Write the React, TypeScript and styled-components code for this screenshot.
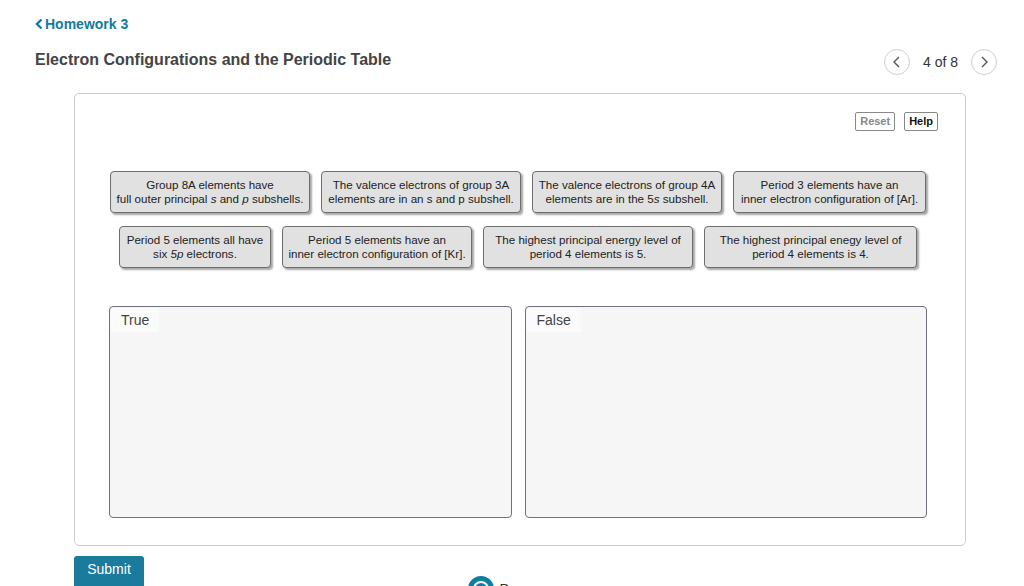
import React from "react";
import styled, { createGlobalStyle } from "styled-components";

const GlobalStyle = createGlobalStyle`
  html, body {
    margin: 0;
    padding: 0;
    background: #ffffff;
    font-family: "Liberation Sans", Arial, Helvetica, sans-serif;
    overflow: hidden;
  }
`;

const rowOne = [
  { id: 1, w: 200, lines: [<>Group 8A elements have</>, <>full outer principal <i>s</i> and <i>p</i> subshells.</>] },
  { id: 2, w: 200, lines: [<>The valence electrons of group 3A</>, <>elements are in an s and p subshell.</>] },
  { id: 3, w: 190, lines: [<>The valence electrons of group 4A</>, <>elements are in the 5<i>s</i> subshell.</>] },
  { id: 4, w: 193, lines: [<>Period 3 elements have an</>, <>inner electron configuration of [Ar].</>] },
];

const rowTwo = [
  { id: 5, w: 152, lines: [<>Period 5 elements all have</>, <>six <i>5p</i> electrons.</>] },
  { id: 6, w: 190, lines: [<>Period 5 elements have an</>, <>inner electron configuration of [Kr].</>] },
  { id: 7, w: 210, lines: [<>The highest principal energy level of</>, <>period 4 elements is 5.</>] },
  { id: 8, w: 213, lines: [<>The highest principal enegy level of</>, <>period 4 elements is 4.</>] },
];

const Page = styled.div`
  width: 1024px;
  height: 586px;
  overflow: hidden;
  box-sizing: border-box;
  padding: 15px 0 0 0;
`;

const Header = styled.div`
  padding: 0 27px 0 35px;
`;

const BackLink = styled.a`
  display: flex;
  align-items: center;
  gap: 2px;
  color: #137b9e;
  font-size: 14px;
  font-weight: bold;
  text-decoration: none;
  height: 18px;
`;

const TitleRow = styled.div`
  display: flex;
  align-items: center;
  justify-content: space-between;
  margin-top: 12px;
  height: 30px;
`;

const Title = styled.h1`
  margin: 0;
  font-size: 16px;
  font-weight: bold;
  color: #444444;
`;

const Pager = styled.div`
  display: flex;
  align-items: center;
  gap: 13px;
  margin-top: 4px;
`;

const RoundButton = styled.div`
  width: 26px;
  height: 26px;
  box-sizing: border-box;
  border: 1px solid #cfcfcf;
  border-radius: 50%;
  display: flex;
  align-items: center;
  justify-content: center;
`;

const PageCount = styled.span`
  font-size: 14px;
  color: #333333;
`;

const Panel = styled.div`
  margin: 18px 58px 0 74px;
  width: 892px;
  box-sizing: border-box;
  border: 1px solid #cbcbcb;
  border-radius: 5px;
  padding: 18px 27px 27px 34px;
`;

const Toolbar = styled.div`
  display: flex;
  justify-content: flex-end;
  gap: 9px;
`;

const ToolButton = styled.button<{ $dim?: boolean }>`
  font-family: "Liberation Sans", Arial, sans-serif;
  font-size: 11px;
  font-weight: bold;
  color: ${(p) => (p.$dim ? "#888888" : "#111111")};
  background: #ffffff;
  border: 1px solid #888888;
  border-radius: 2px;
  height: 19px;
  padding: 0 4px;
  line-height: 17px;
`;

const Body = styled.div`
  padding-right: 11px;
`;

const CardArea = styled.div`
  margin-top: 40px;
  display: flex;
  flex-direction: column;
  gap: 13px;
`;

const CardRow = styled.div`
  display: flex;
  justify-content: center;
  gap: 11px;
`;

const Card = styled.div<{ $w: number }>`
  width: ${(p) => p.$w}px;
  box-sizing: border-box;
  background: #e1e1e1;
  border: 1.5px solid #6d6d6d;
  border-radius: 4px;
  box-shadow: 2px 2px 2px rgba(0, 0, 0, 0.35);
  padding: 6px 3px;
  text-align: center;
  font-size: 11.6px;
  line-height: 14px;
  color: #222222;
  white-space: nowrap;
`;

const Zones = styled.div`
  margin-top: 38px;
  display: flex;
  justify-content: center;
  gap: 13px;
`;

const Zone = styled.div`
  width: 403px;
  height: 212px;
  box-sizing: border-box;
  background: #f6f6f6;
  border: 1.5px solid #707080;
  border-radius: 4px;
  padding: 1px;
`;

const ZoneLabel = styled.div`
  display: inline-block;
  background: #fbfbfb;
  font-size: 14px;
  color: #444444;
  padding: 4px 10px 4px 10px;
  min-width: 27px;
`;

const SubmitButton = styled.button`
  margin: 10px 0 0 74px;
  width: 70px;
  height: 34px;
  border: none;
  border-radius: 3px 3px 0 0;
  background: #1a7b9d;
  color: #ffffff;
  font-family: "Liberation Sans", Arial, sans-serif;
  font-size: 14px;
  padding: 0 0 8px 0;
  display: block;
`;

const Footer = styled.div`
  margin-top: -14px;
  display: flex;
  justify-content: center;
  align-items: flex-start;
  gap: 5px;
  padding-right: 4px;
`;

const Logo = styled.div`
  width: 26px;
  height: 26px;
  border-radius: 50%;
  background: #0d7ea1;
  display: flex;
  align-items: center;
  justify-content: center;
`;

const LogoText = styled.span`
  margin-top: 5px;
  font-size: 14px;
  color: #333333;
`;

const Chevron = ({ dir }: { dir: "left" | "right" }) => (
  <svg width="10" height="12" viewBox="0 0 10 12">
    <path
      d={dir === "left" ? "M7 1 L2 6 L7 11" : "M3 1 L8 6 L3 11"}
      fill="none"
      stroke="#555"
      strokeWidth="1.4"
    />
  </svg>
);

const App = () => {
  return (
    <Page>
      <GlobalStyle />
      <Header>
        <BackLink href="#">
          <svg width="8" height="12" viewBox="0 0 8 12">
            <path d="M6.5 1.5 L2 6 L6.5 10.5" fill="none" stroke="#137b9e" strokeWidth="2.4" />
          </svg>
          Homework 3
        </BackLink>
        <TitleRow>
          <Title>Electron Configurations and the Periodic Table</Title>
          <Pager>
            <RoundButton>
              <Chevron dir="left" />
            </RoundButton>
            <PageCount>4 of 8</PageCount>
            <RoundButton>
              <Chevron dir="right" />
            </RoundButton>
          </Pager>
        </TitleRow>
      </Header>
      <Panel>
        <Toolbar>
          <ToolButton $dim>Reset</ToolButton>
          <ToolButton>Help</ToolButton>
        </Toolbar>
        <Body>
          <CardArea>
            {[rowOne, rowTwo].map((row, i) => (
              <CardRow key={i}>
                {row.map((card) => (
                  <Card key={card.id} $w={card.w}>
                    {card.lines[0]}
                    <br />
                    {card.lines[1]}
                  </Card>
                ))}
              </CardRow>
            ))}
          </CardArea>
          <Zones>
            <Zone>
              <ZoneLabel>True</ZoneLabel>
            </Zone>
            <Zone>
              <ZoneLabel>False</ZoneLabel>
            </Zone>
          </Zones>
        </Body>
      </Panel>
      <SubmitButton>Submit</SubmitButton>
      <Footer>
        <Logo>
          <svg width="18" height="18" viewBox="0 0 18 18">
            <circle cx="9" cy="9" r="7" fill="none" stroke="#fff" strokeWidth="2" />
          </svg>
        </Logo>
        <LogoText>Pearson</LogoText>
      </Footer>
    </Page>
  );
};

export default App;
